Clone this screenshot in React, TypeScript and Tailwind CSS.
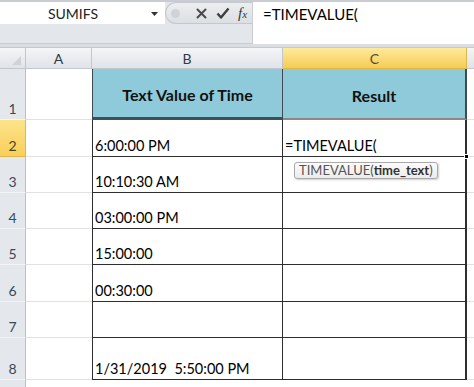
import React from "react";

const FONT = { fontFamily: "Lato, 'Open Sans', sans-serif" };

type Row = { n: number; h: number; b: string; c?: string };

const ROWS: Row[] = [
  { n: 2, h: 37, b: "6:00:00 PM", c: "=TIMEVALUE(" },
  { n: 3, h: 36, b: "10:10:30 AM" },
  { n: 4, h: 36, b: "03:00:00 PM" },
  { n: 5, h: 36, b: "15:00:00" },
  { n: 6, h: 37, b: "00:30:00" },
  { n: 7, h: 36, b: "" },
  { n: 8, h: 42, b: "1/31/2019  5:50:00 PM" },
];

function FormulaBar() {
  return (
    <div className="flex h-[44px] border-t-2 border-[#c9cdd3] bg-[#e2e5ea]">
      <div className="flex w-[252px] flex-col">
        <div className="flex h-[22px]">
          <div className="relative flex w-[165px] items-center bg-white">
            <span className="w-[146px] text-center text-[14px] text-[#222]">SUMIFS</span>
            <svg width="7" height="4" viewBox="0 0 7 4" className="absolute left-[151px] top-[10px]">
              <path d="M0 0h7L3.5 4z" fill="#333" />
            </svg>
          </div>
          <div className="flex flex-1 items-center rounded-l-[11px] border border-r-0 border-[#c4c8ce] bg-gradient-to-b from-[#eceef0] to-[#dcdfe3]">
            <div className="ml-[5px] h-[9px] w-[9px] rounded-full bg-[#cfd3d8]" />
            <svg width="11" height="11" viewBox="0 0 11 11" className="ml-[16px]">
              <path d="M1.5 1.5l8 8M9.5 1.5l-8 8" stroke="#4a4a4a" strokeWidth="2" strokeLinecap="round" />
            </svg>
            <svg width="14" height="12" viewBox="0 0 14 12" className="ml-[9px]">
              <path d="M1.5 6.5l3.5 4L12.5 1.5" stroke="#3d3d3d" strokeWidth="2.4" fill="none" strokeLinejoin="round" />
            </svg>
            <span
              className="ml-[8px] text-[15px] italic leading-none text-[#3a3a3a]"
              style={{ fontFamily: "'Liberation Serif', serif" }}
            >
              f<span className="text-[11px]">x</span>
            </span>
          </div>
        </div>
        <div className="flex-1 border-b border-[#c8ccd2] bg-[#e3e6ea]" />
      </div>
      <div className="flex-1 border-l border-[#c9cdd3] bg-white pl-[10px] pt-[2px] text-[15px] leading-[20px] text-black">
        =TIMEVALUE(
      </div>
    </div>
  );
}

function ColHeader({ label, w, active }: { label: string; w: string; active?: boolean }) {
  return (
    <div
      className={`flex items-center justify-center border-r border-b text-[14px] ${w} ${
        active
          ? "border-[#e0b84a] bg-gradient-to-b from-[#fdea9c] to-[#f7cb4f] text-[#5a4b24]"
          : "border-[#c2c7ce] bg-gradient-to-b from-[#f4f5f7] to-[#e0e3e8] text-[#2e3b4a]"
      }`}
    >
      {label}
    </div>
  );
}

function RowHeader({ n, active }: { n?: number; active?: boolean }) {
  return (
    <div
      className={`flex w-[26px] items-end justify-center border-r border-b pb-[2px] text-[14px] leading-[16px] ${
        active
          ? "border-[#e0b84a] bg-gradient-to-b from-[#fde38a] to-[#f8cf58] text-[#4d4224]"
          : "border-r-[#b9bfc7] border-b-[#f2f4f6] bg-[#e4e8ed] text-[#3a4857]"
      }`}
    >
      {n}
    </div>
  );
}

export default function App() {
  return (
    <div className="relative h-[387px] w-[474px] overflow-hidden bg-white" style={FONT}>
      <FormulaBar />
      <div className="h-[4px] border-b border-[#c5cad0] bg-[#dadee3]" />

      {/* column headers */}
      <div className="flex h-[21px]">
        <div className="relative w-[26px] border-r border-b border-[#c2c7ce] bg-gradient-to-b from-[#f4f5f7] to-[#e0e3e8]">
          <svg width="9" height="9" viewBox="0 0 9 9" className="absolute bottom-[3px] right-[4px]">
            <path d="M9 0v9H0z" fill="#cfd3d8" />
          </svg>
        </div>
        <ColHeader label="A" w="w-[66px]" />
        <ColHeader label="B" w="w-[191px]" />
        <ColHeader label="C" w="w-[184px]" active />
        <div className="flex-1 border-b border-[#c2c7ce] bg-gradient-to-b from-[#f4f5f7] to-[#e0e3e8]" />
      </div>

      {/* row 1 */}
      <div className="flex h-[51px]">
        <RowHeader n={1} />
        <div className="w-[66px] border-b border-[#dfe1e3]" />
        <div className="flex w-[191px] items-center justify-center border-x border-b-[3px] border-x-[#3b4a53] border-b-[#3a525c] bg-[#8ecad9] pt-[4px] text-[16px] font-bold text-[#111]">
          Text Value of Time
        </div>
        <div className="flex w-[184px] items-center justify-center border-r-2 border-b-2 border-r-[#3b4a53] border-b-[#8f8782] bg-[#8ecad9] pt-[4px] text-[16px] font-bold text-[#111]">
          Result
        </div>
        <div className="flex-1 border-b border-[#dfe1e3]" />
      </div>

      {ROWS.map((r) => (
        <div key={r.n} className="flex" style={{ height: r.h }}>
          <RowHeader n={r.n} active={r.n === 2} />
          <div className="w-[66px] border-b border-[#dfe1e3]" />
          <div className="flex w-[191px] items-end whitespace-pre border-x border-b border-[#2e2e2e] pb-[2px] pl-[2px] text-[14.5px] leading-[17px] text-black">
            {r.b}
          </div>
          <div className="flex w-[184px] items-end border-r-2 border-b border-[#2e2e2e] pb-[2px] pl-[2px] text-[14.5px] leading-[17px] text-black">
            {r.c}
          </div>
          <div className="flex-1 border-b border-[#dfe1e3]" />
        </div>
      ))}

      <div className="flex h-[7px]">
        <div className="w-[26px] border-r border-[#b9bfc7] bg-[#e4e8ed]" />
        <div className="flex-1" />
      </div>

      {/* fill handle of active cell C2 */}
      <div className="absolute left-[464px] top-[154px] h-[5px] w-[5px] border border-white bg-black" />

      {/* function tooltip */}
      <div className="absolute left-[294px] top-[162px] flex h-[17px] items-center rounded-[3px] border border-[#a9a9a9] bg-gradient-to-b from-[#fbfbfb] to-[#ececec] px-[4px] text-[13px] leading-none text-[#555] shadow-[1px_1px_2px_rgba(0,0,0,0.2)]">
        TIMEVALUE(<span className="font-bold text-[#333]">time_text</span>)
      </div>
    </div>
  );
}
